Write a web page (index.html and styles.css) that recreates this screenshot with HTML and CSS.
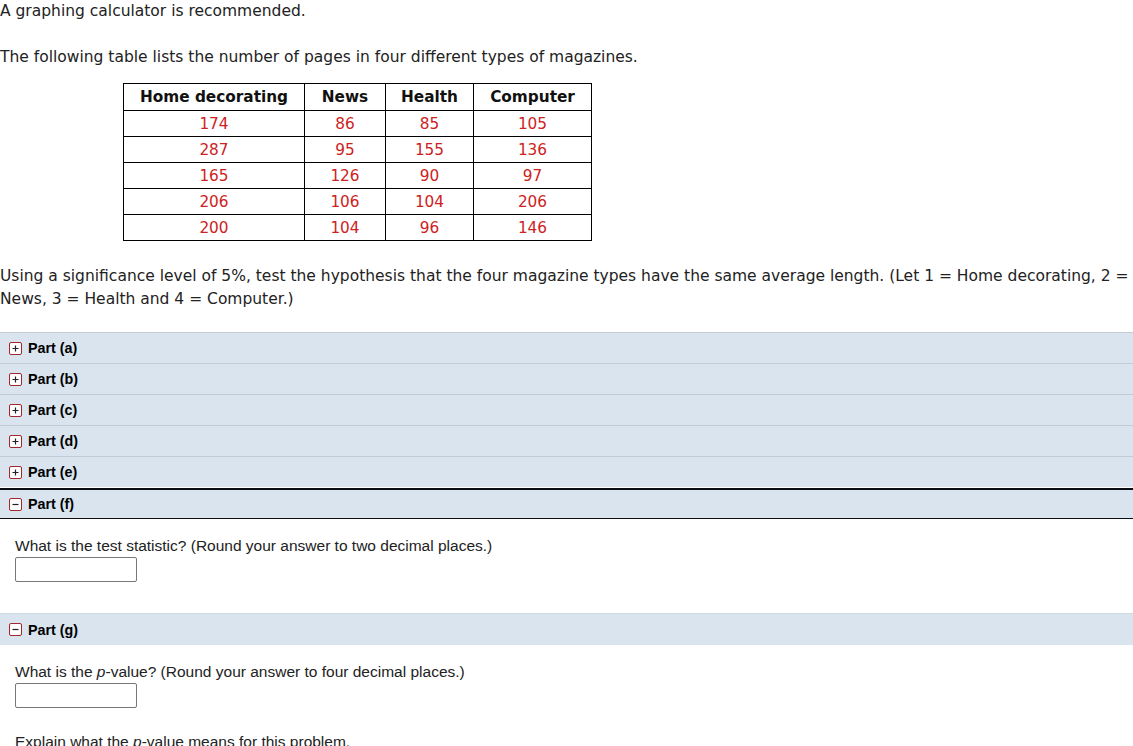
FILE: index.html
```html
<!DOCTYPE html>
<html>
<head>
<meta charset="utf-8">
<link rel="stylesheet" href="styles.css">
</head>
<body>
<p class="intro first">A graphing calculator is recommended.</p>
<p class="intro second">The following table lists the number of pages in four different types of magazines.</p>
<table class="data">
  <thead>
    <tr><th>Home decorating</th><th>News</th><th>Health</th><th>Computer</th></tr>
  </thead>
  <tbody>
    <tr><td>174</td><td>86</td><td>85</td><td>105</td></tr>
    <tr><td>287</td><td>95</td><td>155</td><td>136</td></tr>
    <tr><td>165</td><td>126</td><td>90</td><td>97</td></tr>
    <tr><td>206</td><td>106</td><td>104</td><td>206</td></tr>
    <tr><td>200</td><td>104</td><td>96</td><td>146</td></tr>
  </tbody>
</table>
<p class="question">Using a significance level of 5%, test the hypothesis that the four magazine types have the same average length. (Let 1 = Home decorating, 2 = News, 3 = Health and 4 = Computer.)</p>

<div class="parts">
  <div class="part-head"><svg class="tog" viewBox="0 0 13 13"><rect x="0.5" y="0.5" width="12" height="12" rx="1.5" fill="#fff" stroke="#a3262c"/><path d="M3.5 6.5h6M6.5 3.5v6" stroke="#222" stroke-width="1.2"/></svg><span>Part (a)</span></div>
  <div class="part-head"><svg class="tog" viewBox="0 0 13 13"><rect x="0.5" y="0.5" width="12" height="12" rx="1.5" fill="#fff" stroke="#a3262c"/><path d="M3.5 6.5h6M6.5 3.5v6" stroke="#222" stroke-width="1.2"/></svg><span>Part (b)</span></div>
  <div class="part-head"><svg class="tog" viewBox="0 0 13 13"><rect x="0.5" y="0.5" width="12" height="12" rx="1.5" fill="#fff" stroke="#a3262c"/><path d="M3.5 6.5h6M6.5 3.5v6" stroke="#222" stroke-width="1.2"/></svg><span>Part (c)</span></div>
  <div class="part-head"><svg class="tog" viewBox="0 0 13 13"><rect x="0.5" y="0.5" width="12" height="12" rx="1.5" fill="#fff" stroke="#a3262c"/><path d="M3.5 6.5h6M6.5 3.5v6" stroke="#222" stroke-width="1.2"/></svg><span>Part (d)</span></div>
  <div class="part-head"><svg class="tog" viewBox="0 0 13 13"><rect x="0.5" y="0.5" width="12" height="12" rx="1.5" fill="#fff" stroke="#a3262c"/><path d="M3.5 6.5h6M6.5 3.5v6" stroke="#222" stroke-width="1.2"/></svg><span>Part (e)</span></div>
  <div class="part-head current"><svg class="tog" viewBox="0 0 13 13"><rect x="0.5" y="0.5" width="12" height="12" rx="1.5" fill="#fff" stroke="#a3262c"/><path d="M3.5 6.5h6" stroke="#222" stroke-width="1.2"/></svg><span>Part (f)</span></div>
  <div class="part-body">
    <p class="prompt">What is the test statistic? (Round your answer to two decimal places.)</p>
    <input class="answer" type="text">
  </div>
  <div class="part-head open"><svg class="tog" viewBox="0 0 13 13"><rect x="0.5" y="0.5" width="12" height="12" rx="1.5" fill="#fff" stroke="#a3262c"/><path d="M3.5 6.5h6" stroke="#222" stroke-width="1.2"/></svg><span>Part (g)</span></div>
  <div class="part-body">
    <p class="prompt">What is the <i>p</i>-value? (Round your answer to four decimal places.)</p>
    <input class="answer" type="text">
    <p class="prompt explain">Explain what the <i>p</i>-value means for this problem.</p>
  </div>
</div>
</body>
</html>
```

FILE: styles.css
```css
html, body {
  margin: 0;
  padding: 0;
  background: #fff;
}
body {
  font-family: "DejaVu Sans", Verdana, sans-serif;
  font-size: 15.5px;
  color: #222;
  overflow: hidden;
}
.intro {
  margin: 0;
  line-height: 20px;
}
.first {
  padding-top: 1px;
}
.second {
  margin-top: 26px;
}
.data {
  border-collapse: collapse;
  margin: 16px 0 0 123px;
  font-size: 15.3px;
}
.data th,
.data td {
  border: 1px solid #000;
  height: 25px;
  padding: 0;
  text-align: center;
  line-height: 18px;
}
.data th {
  height: 26px;
  font-weight: bold;
  color: #111;
}
.data th:nth-child(1) { width: 180px; }
.data th:nth-child(2) { width: 80px; }
.data th:nth-child(3) { width: 87px; }
.data th:nth-child(4) { width: 117px; }
.data td {
  color: #cc2222;
}
.question {
  margin: 24px 0 0 0;
  line-height: 23px;
  padding-right: 2px;
}
.parts {
  margin-top: 21px;
  font-family: "Liberation Sans", Arial, sans-serif;
}
.part-head {
  display: flex;
  align-items: center;
  gap: 6px;
  height: 30px;
  padding-left: 9px;
  background: #d9e4ee;
  border-top: 1px solid #c2cad2;
  font-weight: bold;
  font-size: 14.3px;
  color: #000;
}
.part-head.current {
  margin-top: 1px;
  border-top: 2px solid #0b0f14;
  border-bottom: 1px solid #0b0f14;
  height: 28px;
}
.part-head.open {
  border-top: 1px solid #d0dae4;
  height: 31px;
}
.tog {
  width: 13px;
  height: 13px;
  flex: none;
}
.part-body {
  padding: 19px 15px 31px;
}
.prompt {
  margin: 0;
  font-size: 15.5px;
  line-height: 16px;
  color: #222;
}
.answer {
  display: block;
  box-sizing: border-box;
  width: 122px;
  height: 25px;
  margin-top: 3px;
  border: 1px solid #777;
  border-radius: 2px;
  background: #fff;
  padding: 0;
}
.explain {
  margin-top: 26px;
}
```
